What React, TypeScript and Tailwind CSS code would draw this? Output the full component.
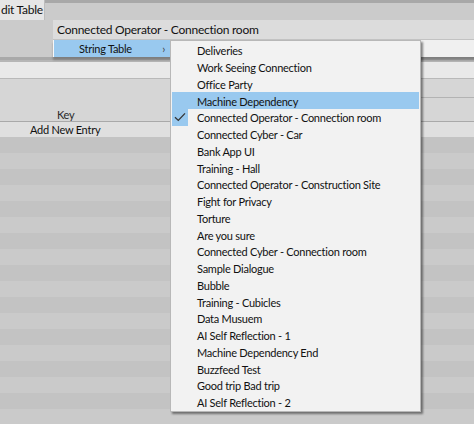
import React from 'react';

const tables = [
  'Deliveries',
  'Work Seeing Connection',
  'Office Party',
  'Machine Dependency',
  'Connected Operator - Connection room',
  'Connected Cyber - Car',
  'Bank App UI',
  'Training - Hall',
  'Connected Operator - Construction Site',
  'Fight for Privacy',
  'Torture',
  'Are you sure',
  'Connected Cyber - Connection room',
  'Sample Dialogue',
  'Bubble',
  'Training - Cubicles',
  'Data Musuem',
  'AI Self Reflection - 1',
  'Machine Dependency End',
  'Buzzfeed Test',
  'Good trip Bad trip',
  'AI Self Reflection - 2',
];

const hovered = 'Machine Dependency';
const selected = 'Connected Operator - Connection room';

function Check() {
  return (
    <svg width="12" height="10" viewBox="0 0 12 10" className="text-[#333]">
      <path d="M1 5.2 L4.3 8.4 L11 1.4" fill="none" stroke="currentColor" strokeWidth="1.3" />
    </svg>
  );
}

export default function App() {
  const stripes = Array.from({ length: 18 });

  return (
    <div className="relative w-[474px] h-[424px] overflow-hidden bg-[#c8c8c8] text-[#111] font-['Lato',sans-serif] tracking-[-0.25px]">
      {/* tab strip */}
      <div className="flex h-[20px]">
        <div className="w-[45px] bg-[#e6e6e6] border-r border-[#bdbdbd] text-[12px] leading-[20px] pl-[1px] whitespace-nowrap">
          dit Table
        </div>
        <div className="flex-1 bg-[#cbcbcb] border-t-[3px] border-[#a8a8a8]" />
      </div>

      {/* table field */}
      <div className="flex h-[20px] bg-[#cbcbcb]">
        <div className="w-[53px]" />
        <div className="flex-1 bg-[#dcdcdc] border-b border-[#c2c2c2] text-[12px] leading-[19px] pl-[4px] whitespace-nowrap">
          Connected Operator - Connection room
        </div>
      </div>

      {/* under the field, covered by the menu */}
      <div className="h-[17px] bg-[#cbcbcb]" />
      <div className="h-[5px] bg-[#a9a9a9] border-b-2 border-[#b6b6b6]" />

      {/* search row */}
      <div className="h-[17px] bg-[#e9e9e9] border-b border-[#b9b9b9]" />

      {/* header */}
      <div className="flex h-[43px] bg-[#d6d6d6] border-b border-[#a9a9a9]">
        <div className="w-[180px] flex items-end pl-[57px] text-[11px] leading-[12px] text-[#2a2a2a]">
          Key
        </div>
        <div className="flex-1">
          <div className="h-[19px] border-b border-[#b3b3b3]" />
        </div>
      </div>

      {/* add entry */}
      <div className="h-[15px] bg-[#dfdfdf] flex items-center pl-[30px] text-[11px] leading-none">
        Add New Entry
      </div>

      {/* rows */}
      <div className="flex flex-col">
        {stripes.map((_, i) => (
          <div key={i} className={i % 2 === 0 ? 'h-[16px] bg-[#c3c3c3]' : 'h-[16px] bg-[#cacaca]'} />
        ))}
      </div>

      {/* parent menu */}
      <div className="absolute left-[53px] top-[40px] w-[440px] h-[17px] bg-[#f0f0f0] border-l border-[#f8f8f8] shadow-[0_3px_2px_rgba(0,0,0,0.25)]">
        <div className="w-[116px] h-[17px] bg-[#99c9ef] flex items-center text-[11px] leading-none">
          <span className="pl-[25px] flex-1">String Table</span>
          <span className="pr-[5px] text-[11px] text-[#444]">›</span>
        </div>
      </div>

      {/* sub menu */}
      <div className="absolute left-[170px] top-[40px] w-[251px] h-[372px] bg-[#f2f2f2] border border-[#b8b8b8] shadow-[2px_2px_2px_rgba(0,0,0,0.45)] px-[1px] pt-[1px]">
        {tables.map((t) => (
          <div
            key={t}
            className={
              t === hovered
                ? 'flex items-center h-[16.76px] bg-[#99c9ef] text-[11px] leading-none whitespace-nowrap'
                : 'flex items-center h-[16.76px] text-[11px] leading-none whitespace-nowrap'
            }
          >
            <div
              className={
                t === selected
                  ? 'w-[16px] h-full bg-[#99c9ef] flex items-center justify-center'
                  : 'w-[16px] h-full'
              }
            >
              {t === selected ? <Check /> : null}
            </div>
            <span className="pl-[9px] pt-[1px]">{t}</span>
          </div>
        ))}
      </div>
    </div>
  );
}
